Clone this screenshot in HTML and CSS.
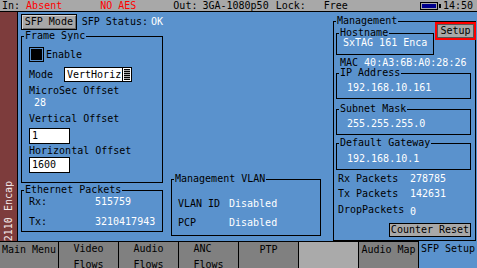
FILE: index.html
```html
<!DOCTYPE html>
<html lang="en">
<head>
  <meta charset="UTF-8">
  <title>SFP Setup</title>
  <link rel="stylesheet" href="styles.css">
</head>
<body>
  <div class="topbar">
    <span class="in">In: <span class="alarm">Absent</span></span>
    <span class="alarm aes">NO AES</span>
    <span class="out">Out:</span>
    <span class="fmt">3GA-1080p50</span>
    <span class="lock">Lock:</span>
    <span class="free">Free</span>
    <span class="battery"><span class="cell"></span></span>
    <span class="clock">14:50</span>
  </div>

  <div class="main">
    <div class="side"><span class="side-label">2110 Encap</span></div>

    <div class="content">
      <!-- left column -->
      <div class="col-left">
        <div class="mode-row">
          <button class="btn sfp-mode">SFP Mode</button>
          <span class="status">SFP Status:<span class="val ok">OK</span></span>
        </div>

        <fieldset class="box frame">
          <legend>Frame Sync</legend>
          <div class="frame-body">
            <div class="check-row"><span class="check"></span>Enable</div>
            <div class="mode-sel">
              <span class="mode-lbl">Mode</span>
              <span class="select">VertHoriz<span class="scroll"></span></span>
            </div>
            <div class="cap micro">MicroSec Offset</div>
            <div class="val micro-val">28</div>
            <div class="cap vert">Vertical Offset</div>
            <div class="field vert-field">1</div>
            <div class="cap horiz">Horizontal Offset</div>
            <div class="field horiz-field">1600</div>
          </div>
        </fieldset>

        <fieldset class="box eth">
          <legend>Ethernet Packets</legend>
          <div class="eth-body">
            <div class="stat rx"><span class="stat-lbl">Rx:</span><span class="val">515759</span></div>
            <div class="stat tx"><span class="stat-lbl">Tx:</span><span class="val">3210417943</span></div>
          </div>
        </fieldset>
      </div>

      <!-- middle column -->
      <div class="col-mid">
        <fieldset class="box vlan">
          <legend>Management VLAN</legend>
          <div class="vlan-body">
            <div class="stat vid"><span class="stat-lbl">VLAN ID</span><span class="val">Disabled</span></div>
            <div class="stat pcp"><span class="stat-lbl">PCP</span><span class="val">Disabled</span></div>
          </div>
        </fieldset>
      </div>

      <!-- right column -->
      <div class="col-right">
        <fieldset class="box mgmt">
          <legend>Management</legend>
          <div class="mgmt-body">
            <div class="host-row">
              <fieldset class="box sub host">
                <legend>Hostname</legend>
                <div class="sub-val host-val">SxTAG 161 Enca</div>
              </fieldset>
              <button class="btn setup">Setup</button>
            </div>
            <div class="mac">MAC <span class="val">40:A3:6B:A0:28:26</span></div>
            <fieldset class="box sub ip">
              <legend>IP Address</legend>
              <div class="sub-val">192.168.10.161</div>
            </fieldset>
            <fieldset class="box sub mask">
              <legend>Subnet Mask</legend>
              <div class="sub-val">255.255.255.0</div>
            </fieldset>
            <fieldset class="box sub gw">
              <legend>Default Gateway</legend>
              <div class="sub-val gw-val">192.168.10.1</div>
            </fieldset>
            <div class="pk pk-rx"><span class="pk-lbl">Rx Packets</span><span class="val">278785</span></div>
            <div class="pk pk-tx"><span class="pk-lbl">Tx Packets</span><span class="val">142631</span></div>
            <div class="pk pk-drop"><span class="pk-lbl">DropPackets</span><span class="val drop">0</span></div>
            <button class="btn reset">Counter Reset</button>
          </div>
        </fieldset>
      </div>
    </div>
  </div>

  <div class="nav">
    <div class="tab first"><span class="tab-text">Main Menu</span></div>
    <div class="tab"><span class="tab-text">Video<br>Flows</span></div>
    <div class="tab"><span class="tab-text">Audio<br>Flows</span></div>
    <div class="tab"><span class="tab-text">ANC<br>Flows</span></div>
    <div class="tab"><span class="tab-text">PTP</span></div>
    <div class="tab blank"></div>
    <div class="tab"><span class="tab-text">Audio Map</span></div>
    <div class="tab active"><span class="tab-text">SFP Setup</span></div>
  </div>
</body>
</html>
```

FILE: styles.css
```css
body {
  margin: 0;
  width: 477px;
  height: 268px;
  overflow: hidden;
  background: #5a92cd;
  font-family: "DejaVu Sans Mono", monospace;
  font-size: 10px;
  line-height: 10px;
  color: #000;
}

/* top status bar */
.topbar {
  height: 11px;
  line-height: 11px;
  background: #a8a8a8;
  border-bottom: 1px solid #000;
  display: flex;
  align-items: center;
  white-space: pre;
}
.alarm { color: #f00; }
.in { padding-left: 2px; }
.aes { margin-left: 38px; }
.out { margin-left: 37px; }
.fmt { margin-left: 5px; }
.lock { margin-left: 7px; }
.free { margin-left: 18px; }
.battery {
  margin-left: 72px;
  width: 18px;
  height: 8px;
  box-sizing: border-box;
  border: 1px solid #000;
  padding: 1px;
  display: flex;
  position: relative;
}
.battery .cell {
  flex: 1;
  background: #00008c;
}
.battery::after {
  content: "";
  position: absolute;
  right: -4px;
  top: 1px;
  width: 2px;
  height: 4px;
  background: #000;
}
.clock { margin-left: 5px; }

/* main area */
.main {
  display: flex;
  height: 229px;
}
.side {
  width: 17px;
  background: #7d3c3c;
  border-right: 1px solid #000;
  display: flex;
  align-items: flex-end;
  justify-content: center;
}
.side-label {
  writing-mode: vertical-rl;
  transform: rotate(180deg);
  color: #f4eaea;
  white-space: nowrap;
  line-height: 12px;
}
.content {
  flex: 1;
  display: flex;
  align-items: flex-start;
  padding: 1px 0 0 3px;
}

.val { color: #fff; }

.btn {
  font: inherit;
  line-height: 10px;
  color: #000;
  background: #a8a8a8;
  border: 1px solid #000;
  padding: 0;
  margin: 0;
  box-sizing: border-box;
}

.box {
  margin: 0;
  padding: 0;
  border: 1px solid #000;
  min-width: 0;
  box-sizing: border-box;
}
.box legend {
  padding: 0 1px;
  margin-left: 2px;
  line-height: 10px;
}

/* left column */
.col-left { width: 142px; }
.mode-row {
  display: flex;
  align-items: center;
  white-space: nowrap;
  margin-top: 1px;
  height: 16px;
}
.sfp-mode {
  width: 60px;
  height: 16px;
  box-shadow: inset 1px 1px #d4d4d4, inset -1px -1px #6c6c6c;
}
.status { margin-left: 5px; }
.ok { margin-left: 3px; }

.frame { margin-top: 1px; }
.frame-body { padding: 0 0 9px 7px; }
.check-row {
  margin-top: 6px;
  height: 15px;
  display: flex;
  align-items: center;
}
.check {
  width: 15px;
  height: 15px;
  box-sizing: border-box;
  border: 1px solid #000;
  background: #000;
  box-shadow: inset 0 0 0 1px #5a92cd;
  margin-right: 2px;
}
.mode-sel {
  margin-top: 5px;
  display: flex;
  align-items: center;
}
.mode-lbl { width: 35px; }
.select {
  width: 68px;
  height: 15px;
  box-sizing: border-box;
  border: 1px solid #000;
  background: #fff;
  display: flex;
  align-items: center;
  padding-left: 2px;
}
.scroll {
  margin-left: auto;
  width: 9px;
  height: 13px;
  box-sizing: border-box;
  border-left: 1px solid #000;
  padding: 1px;
  background: #a8a8a8 content-box;
  background-image: repeating-linear-gradient(#000 0 1px, #a8a8a8 1px 2px);
}
.micro { margin-top: 4px; }
.micro-val { margin-top: 2px; padding-left: 5px; }
.vert { margin-top: 6px; }
.field {
  width: 41px;
  height: 16px;
  box-sizing: border-box;
  border: 1px solid #000;
  background: #fff;
  padding-left: 2px;
  line-height: 14px;
}
.vert-field { margin-top: 4px; }
.horiz { margin-top: 2px; }
.horiz-field { margin-top: 1px; }

.eth { margin-top: 2px; }
.eth-body { padding: 0 0 4px 7px; }
.stat { display: flex; }
.eth .stat-lbl { width: 66px; }
.rx { margin-top: 2px; }
.tx { margin-top: 10px; }

/* middle column */
.col-mid {
  width: 150px;
  margin-left: 8px;
  margin-top: 161px;
}
.vlan-body { padding: 0 0 7px 6px; }
.vlan .stat-lbl { width: 51px; }
.vid { margin-top: 15px; }
.pcp { margin-top: 9px; }

/* right column */
.col-right {
  width: 143px;
  margin-left: 12px;
}
.mgmt { margin-top: 3px; }
.mgmt-body {
  padding: 0 0 3px 2px;
  display: flex;
  flex-direction: column;
}
.host-row {
  display: flex;
  align-items: flex-start;
}
.host {
  width: 98px;
  margin-top: 2px;
}
.sub-val {
  margin-top: 5px;
  padding: 0 0 5px 10px;
  color: #fff;
}
.host-val {
  margin-top: 0;
  padding: 0 0 6px 6px;
}
.setup {
  width: 41px;
  height: 18px;
  margin: -4px -2px 0 1px;
  border: 2px solid #f00;
  box-shadow: inset 0 0 0 1px #555;
}
.mac {
  margin-top: 3px;
  padding-left: 4px;
}
.ip { width: 135px; }
.mask { width: 135px; margin-top: 5px; }
.gw { width: 135px; margin-top: 3px; }
.gw-val { margin-top: 6px; }
.pk {
  display: flex;
  padding-left: 2px;
}
.pk-lbl { width: 72px; }
.pk-rx { margin-top: 4px; }
.pk-tx { margin-top: 5px; }
.pk-drop { margin-top: 6px; }
.drop { padding-top: 2px; }
.reset {
  align-self: flex-end;
  width: 82px;
  height: 14px;
  margin: 6px 4px 0 0;
}

/* bottom tab bar */
.nav {
  display: flex;
  height: 27px;
}
.tab {
  width: 60px;
  box-sizing: border-box;
  background: #808080;
  border-top: 1px solid #000;
  border-right: 1px solid #000;
  text-align: center;
  line-height: 16px;
  overflow: hidden;
}
.tab.first { width: 59px; }
.tab.blank { background: #aaa; }
.tab.active {
  width: 58px;
  background: #5a92cd;
  border: none;
}
.tab-text {
  display: inline-block;
  text-align: left;
  margin-top: -1px;
  white-space: nowrap;
}
```
